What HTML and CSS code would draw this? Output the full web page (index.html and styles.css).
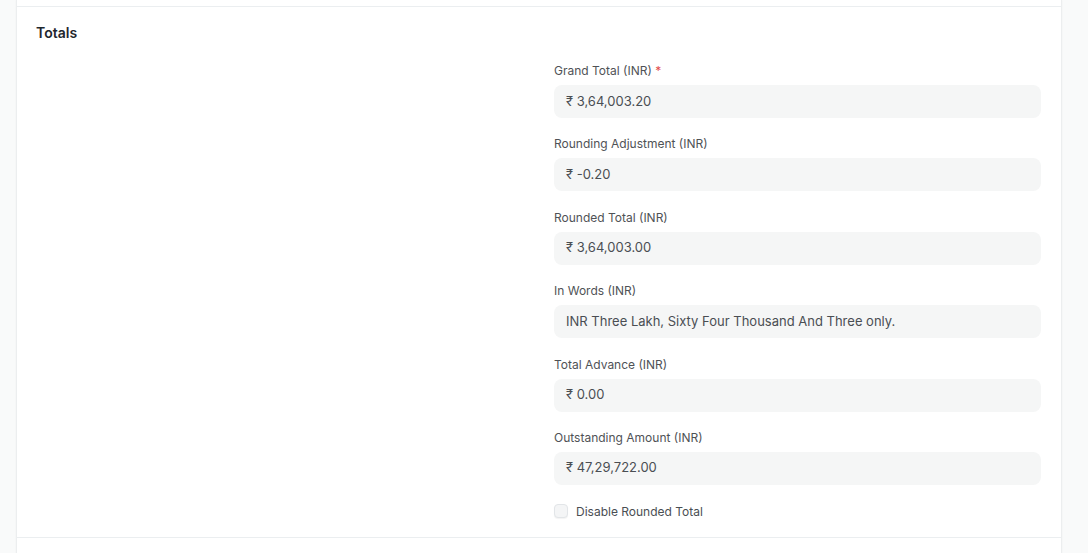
FILE: index.html
```html
<!DOCTYPE html>
<html>
<head>
<meta charset="utf-8">
<link rel="stylesheet" href="styles.css">
</head>
<body>
<div class="card">
  <div class="prev-section"></div>
  <div class="section">
    <div class="section-head">Totals</div>
    <div class="section-body">
      <div class="col"></div>
      <div class="col">
        <div class="form-group">
          <div class="control-label">Grand Total (INR) <span class="req">*</span></div>
          <div class="control-value">₹ 3,64,003.20</div>
        </div>
        <div class="form-group">
          <div class="control-label">Rounding Adjustment (INR)</div>
          <div class="control-value">₹ -0.20</div>
        </div>
        <div class="form-group">
          <div class="control-label">Rounded Total (INR)</div>
          <div class="control-value">₹ 3,64,003.00</div>
        </div>
        <div class="form-group">
          <div class="control-label">In Words (INR)</div>
          <div class="control-value">INR Three Lakh, Sixty Four Thousand And Three only.</div>
        </div>
        <div class="form-group">
          <div class="control-label">Total Advance (INR)</div>
          <div class="control-value">₹ 0.00</div>
        </div>
        <div class="form-group">
          <div class="control-label">Outstanding Amount (INR)</div>
          <div class="control-value">₹ 47,29,722.00</div>
        </div>
        <label class="checkbox-row">
          <span class="checkbox"></span>
          <span class="checkbox-label">Disable Rounded Total</span>
        </label>
      </div>
    </div>
  </div>
  <div class="next-section"></div>
</div>
</body>
</html>
```

FILE: styles.css
```css
* { box-sizing: border-box; }
html, body {
  margin: 0;
  padding: 0;
  background: #f9fafa;
  font-family: Inter, "Noto Sans", sans-serif;
  color: #383838;
  -webkit-font-smoothing: antialiased;
}
body { height: 553px; overflow: hidden; }
.card {
  margin-left: 16px;
  width: 1046px;
  background: #ffffff;
  border-left: 1px solid #eceeef;
  border-right: 1px solid #eceeef;
  box-shadow: 0 0 2px rgba(0,0,0,0.04);
}
.prev-section {
  height: 7px;
  border-bottom: 1px solid #ebeef0;
}
.section {
  padding: 16px 20px 16px 19px;
  border-bottom: 1px solid #ebeef0;
}
.section-head {
  font-size: 14px;
  line-height: 20px;
  font-weight: 600;
  color: #1f272e;
  margin-bottom: 20px;
}
.section-body {
  display: grid;
  grid-template-columns: 487px 487px;
  column-gap: 31px;
}
.form-group { margin-bottom: 18.4px; }
.control-label {
  font-size: 12px;
  line-height: 16px;
  color: #4f5256;
  margin-bottom: 6px;
}
.req { color: #e24c4c; }
.control-value {
  height: 33px;
  background: #f5f6f6;
  border-radius: 8px;
  padding: 0 12px 2px 12px;
  display: flex;
  align-items: center;
  font-size: 13px;
  color: #4a4e53;
}
.checkbox-row {
  display: flex;
  align-items: center;
  gap: 8px;
  height: 20px;
  margin-top: -2px;
}
.checkbox {
  width: 14px;
  height: 14px;
  border-radius: 4px;
  background: #f4f5f6;
  border: 1px solid #e2e5e8;
  box-shadow: 0 1px 1px rgba(0,0,0,0.05);
}
.checkbox-label {
  font-size: 12px;
  color: #4a4e53;
}
.next-section { height: 20px; }
```
